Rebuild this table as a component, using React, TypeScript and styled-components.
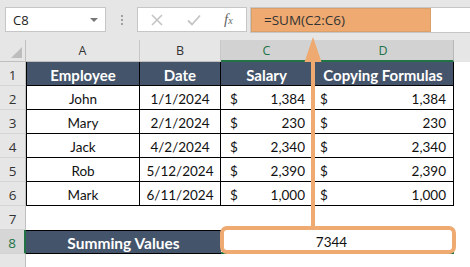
import React from "react";
import styled, { createGlobalStyle, css } from "styled-components";

const ORANGE = "#eeaa70";
const SLATE = "#44546a";
const GREEN = "#217346";

const GlobalStyle = createGlobalStyle`
  html, body {
    margin: 0;
    padding: 0;
    background: #ffffff;
  }
  * {
    box-sizing: border-box;
  }
`;

type Row = {
  n: number;
  name: string;
  date: string;
  salary: string;
};

const rows: Row[] = [
  { n: 2, name: "John", date: "1/1/2024", salary: "1,384" },
  { n: 3, name: "Mary", date: "2/1/2024", salary: "230" },
  { n: 4, name: "Jack", date: "4/2/2024", salary: "2,340" },
  { n: 5, name: "Rob", date: "5/12/2024", salary: "2,390" },
  { n: 6, name: "Mark", date: "6/11/2024", salary: "1,000" },
];

const App: React.FC = () => {
  return (
    <Page>
      <GlobalStyle />
      <Toolbar>
        <NameBox>
          C8
          <Caret />
        </NameBox>
        <Dots>
          <Dot />
          <Dot />
          <Dot />
        </Dots>
        <FxBox>
          <svg width="12" height="12" viewBox="0 0 12 12">
            <path d="M1 1 L11 11 M11 1 L1 11" stroke="#c4c4c4" strokeWidth="1.6" fill="none" />
          </svg>
          <svg width="14" height="12" viewBox="0 0 14 12">
            <path d="M1 6.5 L5 10.5 L13 1.5" stroke="#c4c4c4" strokeWidth="1.8" fill="none" />
          </svg>
          <FxLabel>
            f<small>x</small>
          </FxLabel>
        </FxBox>
        <FormulaInput>
          <FormulaText>=SUM(C2:C6)</FormulaText>
        </FormulaInput>
      </Toolbar>

      <Sheet>
        <Corner />
        <ColHeader>A</ColHeader>
        <ColHeader>B</ColHeader>
        <ColHeader $selected>C</ColHeader>
        <ColHeader $selected>D</ColHeader>
        <ColFiller />

        <RowHeader>1</RowHeader>
        <HeadCell $first>Employee</HeadCell>
        <HeadCell>Date</HeadCell>
        <HeadCell>Salary</HeadCell>
        <HeadCell>Copying Formulas</HeadCell>
        <Blank />

        {rows.map((r) => (
          <React.Fragment key={r.n}>
            <RowHeader>{r.n}</RowHeader>
            <DataCell $first>{r.name}</DataCell>
            <DataCell>{r.date}</DataCell>
            <MoneyCell $c>
              <span>$</span>
              <span>{r.salary}</span>
            </MoneyCell>
            <MoneyCell>
              <span>$</span>
              <span>{r.salary}</span>
            </MoneyCell>
            <Blank />
          </React.Fragment>
        ))}

        <RowHeader>7</RowHeader>
        <Blank $span={4} />
        <Blank />

        <RowHeader $selected>8</RowHeader>
        <SumLabel>Summing Values</SumLabel>
        <SumCell>7344</SumCell>
        <Blank />

        <RowHeader $short />
        <Blank $span={5} />
      </Sheet>

      <Arrow width="18" height="191" viewBox="0 0 18 191">
        <path d="M9 0 L17.5 25 L11 25 L11 191 L7 191 L7 25 L0.5 25 Z" fill={ORANGE} />
      </Arrow>
    </Page>
  );
};

export default App;

const Page = styled.div`
  position: relative;
  width: 470px;
  height: 267px;
  overflow: hidden;
  background: #ffffff;
`;

const Toolbar = styled.div`
  display: flex;
  align-items: flex-start;
  height: 40px;
  padding: 7px 0 0 5px;
  background: #e6e6e6;
  font-family: "Open Sans", "Liberation Sans", sans-serif;
`;

const NameBox = styled.div`
  position: relative;
  display: flex;
  align-items: center;
  width: 101px;
  height: 25px;
  padding-left: 7px;
  background: #ffffff;
  border: 1px solid #c6c6c6;
  font-size: 13px;
  color: #222;
`;

const Caret = styled.span`
  position: absolute;
  right: 7px;
  top: 10px;
  width: 0;
  height: 0;
  border-left: 4px solid transparent;
  border-right: 4px solid transparent;
  border-top: 4px solid #777;
`;

const Dots = styled.div`
  display: flex;
  flex-direction: column;
  gap: 2px;
  margin: 8px 0 0 15px;
`;

const Dot = styled.span`
  width: 2px;
  height: 2px;
  background: #a0a0a0;
`;

const FxBox = styled.div`
  display: flex;
  align-items: center;
  width: 110px;
  height: 25px;
  margin-left: 14px;
  padding-left: 13px;
  gap: 24px;
  background: #ffffff;
  border: 1px solid #c6c6c6;
`;

const FxLabel = styled.span`
  margin-left: -1px;
  font-family: "Liberation Serif", serif;
  font-style: italic;
  font-size: 15px;
  color: #666;
  small {
    font-size: 10px;
  }
`;

const FormulaInput = styled.div`
  flex: 1;
  height: 26px;
  margin-left: 3px;
  background: #ffffff;
  border: 1px solid #c6c6c6;
  border-right: none;
`;

const FormulaText = styled.div`
  display: flex;
  align-items: center;
  width: 180px;
  height: 100%;
  padding-left: 12px;
  background: ${ORANGE};
  border: 1px solid #d9a169;
  font-size: 13.5px;
  color: #333;
`;

const Sheet = styled.div`
  display: grid;
  grid-template-columns: 26px 114px 81px 92px 141px 1fr;
  grid-template-rows: 22px repeat(8, 24px) 13px;
  font-family: "Lato", "Liberation Sans", sans-serif;
  font-size: 13.5px;
  color: #111;
`;

const headerBase = css`
  display: flex;
  align-items: center;
  justify-content: center;
  background: #e6e6e6;
  font-family: "Open Sans", "Liberation Sans", sans-serif;
  font-size: 12.5px;
  color: #333;
`;

const Corner = styled.div`
  position: relative;
  background: #e6e6e6;
  border-right: 1px solid #bfbfbf;
  border-bottom: 1px solid #bfbfbf;
  &::after {
    content: "";
    position: absolute;
    right: 3px;
    bottom: 3px;
    border-left: 11px solid transparent;
    border-bottom: 11px solid #bdbdbd;
  }
`;

const ColHeader = styled.div<{ $selected?: boolean }>`
  ${headerBase}
  border-right: 1px solid #c8c8c8;
  border-bottom: 1px solid #bfbfbf;
  ${(p) =>
    p.$selected &&
    css`
      background: #d2d2d2;
      color: ${GREEN};
      border-bottom: 2px solid ${GREEN};
      border-right-color: #b8b8b8;
    `}
`;

const ColFiller = styled.div`
  background: #e6e6e6;
`;

const RowHeader = styled.div<{ $selected?: boolean; $short?: boolean }>`
  ${headerBase}
  font-size: 13.5px;
  padding-top: 2px;
  border-right: 1px solid #bfbfbf;
  border-bottom: 1px solid #d4d4d4;
  ${(p) =>
    p.$selected &&
    css`
      background: #d6d6d6;
      color: ${GREEN};
      border-right: 2px solid ${GREEN};
    `}
  ${(p) =>
    p.$short &&
    css`
      border-bottom: none;
    `}
`;

const cellBase = css<{ $first?: boolean }>`
  display: flex;
  align-items: center;
  justify-content: center;
  padding-top: 2px;
  border-right: 1px solid #000;
  border-bottom: 1px solid #000;
  ${(p) =>
    p.$first &&
    css`
      border-left: 1px solid #000;
    `}
`;

const HeadCell = styled.div<{ $first?: boolean }>`
  ${cellBase}
  background: ${SLATE};
  color: #ffffff;
  font-weight: 700;
  font-size: 15px;
`;

const DataCell = styled.div<{ $first?: boolean }>`
  ${cellBase}
  background: #ffffff;
`;

const MoneyCell = styled.div<{ $c?: boolean }>`
  ${cellBase}
  justify-content: space-between;
  padding: 2px 7px 0 ${(p) => (p.$c ? 9 : 7)}px;
`;

const Blank = styled.div<{ $span?: number }>`
  background: #ffffff;
  grid-column: span ${(p) => p.$span ?? 1};
`;

const SumLabel = styled.div`
  grid-column: span 2;
  display: flex;
  align-items: center;
  justify-content: center;
  padding-top: 2px;
  background: ${SLATE};
  color: #ffffff;
  font-weight: 700;
  font-size: 15.5px;
  border-top: 1px solid #000;
  border-bottom: 1px solid #000;
`;

const SumCell = styled.div`
  grid-column: span 2;
  position: relative;
  display: flex;
  align-items: center;
  justify-content: center;
  padding: 2px 10px 0 0;
  background: #ffffff;
  border-right: 2px solid ${GREEN};
  border-bottom: 2px solid ${GREEN};
  &::after {
    content: "";
    position: absolute;
    top: -4px;
    left: -1px;
    right: -4px;
    bottom: -2px;
    border: 4px solid ${ORANGE};
    border-radius: 7px;
  }
`;

const Arrow = styled.svg`
  position: absolute;
  left: 304px;
  top: 37px;
`;
